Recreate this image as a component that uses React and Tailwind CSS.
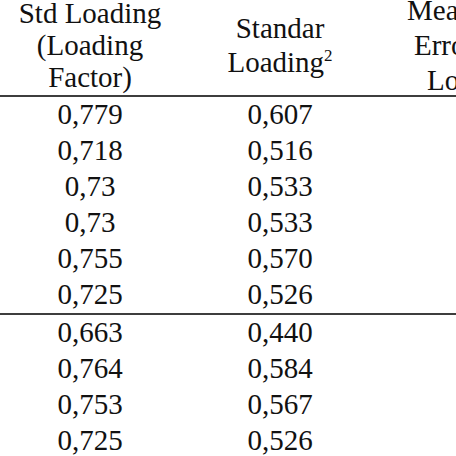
import React from 'react'

const groups = [
  [
    ['0,779', '0,607'],
    ['0,718', '0,516'],
    ['0,73', '0,533'],
    ['0,73', '0,533'],
    ['0,755', '0,570'],
    ['0,725', '0,526'],
  ],
  [
    ['0,663', '0,440'],
    ['0,764', '0,584'],
    ['0,753', '0,567'],
    ['0,725', '0,526'],
  ],
]

const Row = ({ a, b }) => (
  <div className="flex h-[36px] items-center">
    <div className="w-[180px] shrink-0 text-center">{a}</div>
    <div className="w-[200px] shrink-0 text-center">{b}</div>
    <div className="flex-1" />
  </div>
)

export default function App() {
  return (
    <div className="h-[456px] w-[456px] overflow-hidden bg-white font-['Liberation_Serif','Times_New_Roman',serif] text-[29px] text-[#111]">
      <div className="w-[640px]">
        {/* header */}
        <div className="flex h-[97px] items-center border-b-2 border-[#3d3d3d] pb-[5px]">
          <div className="w-[180px] shrink-0 text-center leading-[32px]">
            <div>Std Loading</div>
            <div>(Loading</div>
            <div>Factor)</div>
          </div>
          <div className="w-[200px] shrink-0 text-center leading-[34px]">
            <div>Standar</div>
            <div>
              Loading<sup className="-top-[11px] text-[17px]">2</sup>
            </div>
          </div>
          <div className="flex flex-col whitespace-nowrap leading-[35px]">
            <div className="ml-[27px]">Measurement</div>
            <div className="ml-[34px]">Error</div>
            <div className="ml-[47px]">Loading</div>
          </div>
        </div>

        {/* rows */}
        {groups.map((rows, gi) => (
          <div key={gi} className={gi === 0 ? 'border-b-2 border-[#3d3d3d]' : ''}>
            {rows.map(([a, b], i) => (
              <Row key={i} a={a} b={b} />
            ))}
          </div>
        ))}
      </div>
    </div>
  )
}
